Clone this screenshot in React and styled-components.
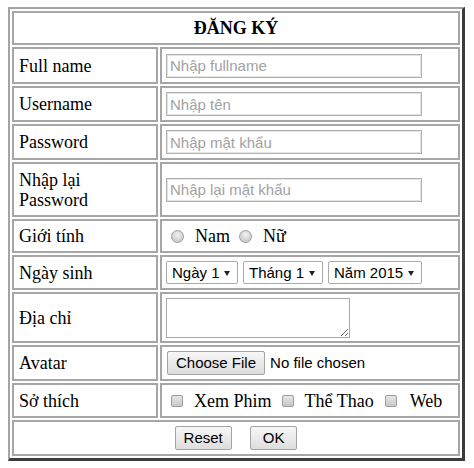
import React from "react";
import styled, { createGlobalStyle } from "styled-components";

const GlobalStyle = createGlobalStyle`
  html, body {
    margin: 0;
    padding: 0;
    background: #fff;
  }
  body {
    font-family: "Liberation Serif", "Times New Roman", serif;
    color: #000;
  }
`;

const Table = styled.table`
  margin: 7px 0 0 8px;
  width: 457px;
  table-layout: fixed;
  border-collapse: separate;
  border-spacing: 2px;
  border-style: solid;
  border-width: 2px 3px 3px 2px;
  border-color: #a4a4a4 #3c3c3c #3c3c3c #a4a4a4;
  font-size: 18px;
  line-height: 20px;
`;

const LabelCol = styled.col`
  width: 146px;
`;

const Row = styled.tr`
  height: ${(p) => p.$h}px;
`;

const Cell = styled.td`
  box-sizing: border-box;
  border: 2px solid #a6a6a6;
  vertical-align: middle;
  padding: 0;
`;

const HeaderCell = styled(Cell)`
  text-align: center;
  font-weight: bold;
`;

const Label = styled(Cell)`
  padding: 0 6px 0 5px;
`;

const Value = styled(Cell)`
  padding: 0 0 0 3px;
`;

const ButtonCell = styled(Cell)`
  text-align: center;
`;

const sans = `"Liberation Sans", Arial, sans-serif`;

const TextInput = styled.input`
  box-sizing: border-box;
  width: 256px;
  height: 24px;
  margin: 0 0 0 1px;
  padding: 0 3px;
  border: 1px solid #b0b0b0;
  box-shadow: inset 0 0 0 1px #e4e4e4;
  font-family: ${sans};
  font-size: 15px;
  color: #000;
  outline: none;

  &::placeholder {
    color: #a2a2a2;
  }
`;

const Inline = styled.div`
  display: flex;
  align-items: center;
  gap: ${(p) => p.$gap || 0}px;
  margin-left: ${(p) => p.$ml || 0}px;
`;

const Option = styled.label`
  display: inline-flex;
  align-items: center;
  gap: ${(p) => p.$gap || 11}px;
  margin-left: ${(p) => p.$ml || 0}px;
`;

const Radio = styled.input.attrs({ type: "radio" })`
  appearance: none;
  margin: 0;
  width: 13px;
  height: 13px;
  border-radius: 50%;
  border: 1px solid #9c9c9c;
  background: radial-gradient(circle at 50% 35%, #f2f2f2 0%, #d2d2d2 60%, #c2c2c2 100%);
`;

const Checkbox = styled.input.attrs({ type: "checkbox" })`
  appearance: none;
  margin: 0;
  width: 12px;
  height: 12px;
  border-radius: 2px;
  border: 1px solid #9c9c9c;
  background: linear-gradient(#e6e6e6, #c8c8c8);
`;

const SelectWrap = styled.span`
  position: relative;
  display: inline-block;

  &::after {
    content: "";
    position: absolute;
    right: 8px;
    top: 10px;
    border-left: 3px solid transparent;
    border-right: 3px solid transparent;
    border-top: 5px solid #222;
    pointer-events: none;
  }
`;

const Select = styled.select`
  appearance: none;
  box-sizing: border-box;
  height: 23px;
  margin: 0;
  padding: 0 17px 0 5px;
  border: 1px solid #ababab;
  border-radius: 2px;
  background: #fff;
  font-family: ${sans};
  font-size: 15px;
  color: #000;
  outline: none;
`;

const TextArea = styled.textarea`
  box-sizing: border-box;
  display: block;
  width: 184px;
  height: 40px;
  margin-left: 1px;
  border: 1px solid #a9a9a9;
  outline: none;
`;

const FileLabel = styled.label`
  display: inline-flex;
  align-items: center;
  gap: 5px;
  margin-left: 2px;
  font-family: ${sans};
  font-size: 15px;
`;

const HiddenFile = styled.input.attrs({ type: "file" })`
  display: none;
`;

const GrayButton = styled.button`
  box-sizing: border-box;
  height: 24px;
  margin: 0;
  padding: 0 ${(p) => p.$px || 8}px;
  border: 1px solid #a4a4a4;
  border-radius: 2px;
  background: linear-gradient(#f7f7f7, #dddddd);
  font-family: ${sans};
  font-size: 15px;
  color: #000;
  line-height: 22px;
`;

const FakeButton = styled(GrayButton).attrs({ as: "span" })`
  display: inline-block;
`;

const Buttons = styled.div`
  display: flex;
  justify-content: center;
  gap: 18px;
`;

export default function App() {
  return (
    <>
      <GlobalStyle />
      <form>
        <Table>
          <colgroup>
            <LabelCol />
            <col />
          </colgroup>
          <tbody>
            <Row $h={34}>
              <HeaderCell colSpan={2}>ĐĂNG KÝ</HeaderCell>
            </Row>
            <Row $h={37}>
              <Label>Full name</Label>
              <Value>
                <TextInput placeholder="Nhập fullname" />
              </Value>
            </Row>
            <Row $h={36}>
              <Label>Username</Label>
              <Value>
                <TextInput placeholder="Nhập tên" />
              </Value>
            </Row>
            <Row $h={36}>
              <Label>Password</Label>
              <Value>
                <TextInput type="password" placeholder="Nhập mật khẩu" />
              </Value>
            </Row>
            <Row $h={55}>
              <Label>Nhập lại Password</Label>
              <Value>
                <TextInput type="password" placeholder="Nhập lại mật khẩu" />
              </Value>
            </Row>
            <Row $h={34}>
              <Label>Giới tính</Label>
              <Value>
                <Inline>
                  <Option $ml={6}>
                    <Radio name="gender" value="nam" />
                    Nam
                  </Option>
                  <Option $ml={9}>
                    <Radio name="gender" value="nu" />
                    Nữ
                  </Option>
                </Inline>
              </Value>
            </Row>
            <Row $h={35}>
              <Label>Ngày sinh</Label>
              <Value>
                <Inline $gap={5} $ml={1}>
                  <SelectWrap>
                    <Select defaultValue="1">
                      <option value="1">Ngày 1</option>
                    </Select>
                  </SelectWrap>
                  <SelectWrap>
                    <Select defaultValue="1">
                      <option value="1">Tháng 1</option>
                    </Select>
                  </SelectWrap>
                  <SelectWrap>
                    <Select defaultValue="2015">
                      <option value="2015">Năm 2015</option>
                    </Select>
                  </SelectWrap>
                </Inline>
              </Value>
            </Row>
            <Row $h={51}>
              <Label>Địa chỉ</Label>
              <Value>
                <TextArea />
              </Value>
            </Row>
            <Row $h={36}>
              <Label>Avatar</Label>
              <Value>
                <FileLabel>
                  <HiddenFile />
                  <FakeButton>Choose File</FakeButton>
                  No file chosen
                </FileLabel>
              </Value>
            </Row>
            <Row $h={35}>
              <Label>Sở thích</Label>
              <Value>
                <Inline>
                  <Option $ml={6}>
                    <Checkbox />
                    Xem Phim
                  </Option>
                  <Option $ml={10}>
                    <Checkbox />
                    Thể Thao
                  </Option>
                  <Option $ml={11} $gap={13}>
                    <Checkbox />
                    Web
                  </Option>
                </Inline>
              </Value>
            </Row>
            <Row $h={36}>
              <ButtonCell colSpan={2}>
                <Buttons>
                  <GrayButton type="reset" $px={8}>
                    Reset
                  </GrayButton>
                  <GrayButton type="button" $px={12}>
                    OK
                  </GrayButton>
                </Buttons>
              </ButtonCell>
            </Row>
          </tbody>
        </Table>
      </form>
    </>
  );
}
